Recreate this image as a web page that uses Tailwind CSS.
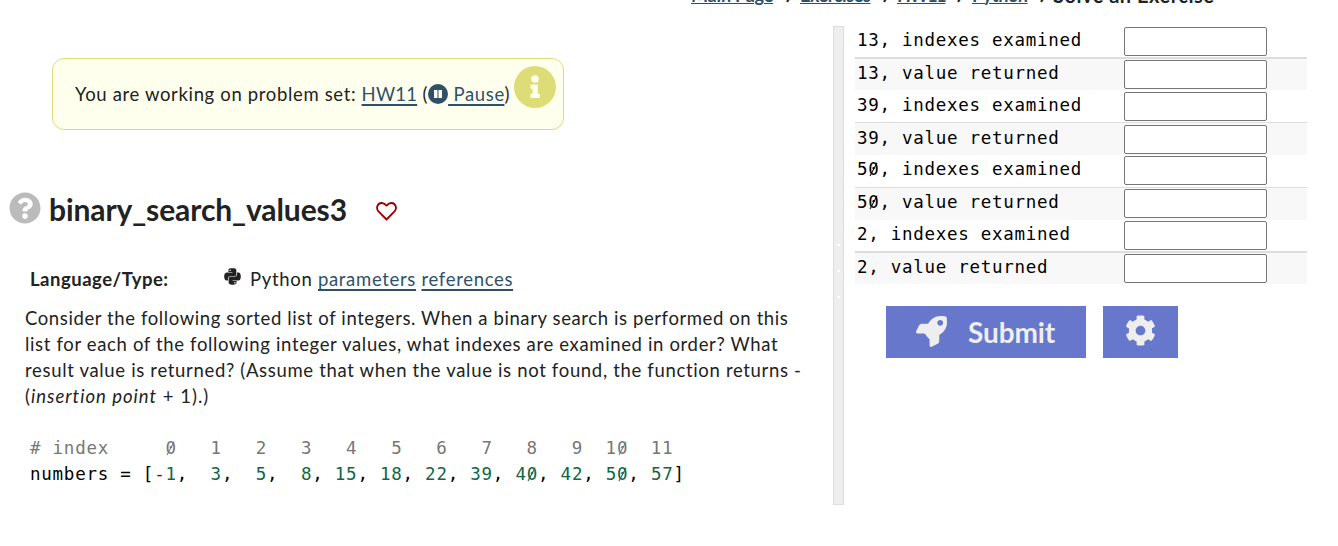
<!DOCTYPE html>
<html lang="en">
<head>
  <meta charset="UTF-8" />
  <meta name="viewport" content="width=device-width, initial-scale=1.0" />
  <title>binary_search_values3</title>
  <script src="https://cdn.jsdelivr.net/npm/@tailwindcss/browser@4"></script>
</head>
<body class="w-[1338px] h-[546px] overflow-hidden bg-white text-[#222] font-['Lato',sans-serif] text-[18.5px] tracking-[0.6px]">
  <!-- breadcrumbs -->
  <nav class="h-[26px] overflow-hidden pl-[691px]">
    <div class="-mt-[18px] flex h-[26px] items-center text-[18px] font-bold leading-[26px] whitespace-nowrap">
      <a class="w-[83px] underline decoration-1 underline-offset-1 text-[#2f5167] tracking-[-0.2px]">Main Page</a>
      <span class="w-[26px] pl-[11px] text-[24px]">›</span>
      <a class="w-[71px] underline decoration-1 underline-offset-1 text-[#2f5167] tracking-[-0.4px]">Exercises</a>
      <span class="w-[26px] pl-[11px] text-[24px]">›</span>
      <a class="w-[48px] underline decoration-1 underline-offset-1 text-[#2f5167] tracking-[-1.3px]">HW11</a>
      <span class="w-[27px] pl-[11px] text-[24px]">›</span>
      <a class="w-[56px] underline decoration-1 underline-offset-1 text-[#2f5167] tracking-[-0.4px]">Python</a>
      <span class="w-[25px] pl-[11px] text-[24px]">›</span>
      <span class="text-[20px] tracking-[0.5px]">Solve an Exercise</span>
    </div>
  </nav>

  <main class="flex h-[520px]">
    <!-- problem description -->
    <section class="w-[833px] shrink-0 pt-8">
      <div class="ml-[52px] flex h-[72px] w-[512px] rounded-xl border border-[#dddd77] bg-[#ffffee] pl-[22px]">
        <p class="w-[439px] leading-[71px] whitespace-nowrap tracking-[0.65px]">You are working on problem set: <a class="underline decoration-2 underline-offset-[3px] text-[#2f5167] tracking-[0.2px]">HW11</a> (<a class="text-[#2f5167]"><svg class="inline size-5 -mt-1" viewBox="0 0 20 20"><circle cx="10" cy="10" r="10" fill="#2f5167"/><path fill="#ffffee" d="M6 6h3.5v8H6zM10.5 6H14v8h-3.5z"/></svg><span class="underline decoration-2 underline-offset-[3px]">&nbsp;Pause</span></a>)</p>
        <svg class="mt-[7px] size-[42px]" viewBox="0 0 42 42"><circle cx="21" cy="21" r="21" fill="#dddd77"/><circle cx="21" cy="13" r="3.8" fill="#ffffee"/><path fill="#ffffee" d="M16.500 18.500h7.300v9.200h2v4.200h-9.300v-4.200h2v-5h-2z"/></svg>
      </div>

      <h1 class="mt-[62px] ml-[9px] flex h-9 items-center text-[30px] font-bold leading-9">
        <svg class="size-[32px] -mt-1 mr-2" viewBox="0 0 512 512"><path fill="#bbb" d="M504 256c0 137-111 248-248 248S8 393 8 256 119 8 256 8s248 111 248 248zM262.700 90c-54.500 0-89.300 23-116.500 63.800-3.500 5.300-2.400 12.400 2.700 16.300l34.700 26.300c5.200 3.900 12.600 3 16.700-2.100 17.900-22.700 30.100-35.800 57.300-35.800 20.400 0 45.700 13.100 45.700 33 0 15-12.400 22.700-32.500 34C247.100 238.500 216 254.900 216 296v4c0 6.600 5.400 12 12 12h56c6.600 0 12-5.400 12-12v-1.300c0-28.500 83.200-29.600 83.200-106.700 0-58-60.200-102-116.500-102zM256 338c-25.400 0-46 20.600-46 46s20.600 46 46 46 46-20.600 46-46-20.600-46-46-46z"/></svg>
        <span class="-mt-0.5 w-[327px] tracking-[-0.1px]">binary_search_values3</span>
        <svg class="h-[19px] w-[21px] mt-[3px]" viewBox="0 0 21 19"><path fill="none" stroke="#990000" stroke-width="1.800" stroke-linejoin="round" d="M10.500 17.500 2.500 9.400C-.3 6.300 1.300 1.200 5.400 1c2.300-.1 3.700 1 5.100 2.600C11.900 2 13.300.9 15.600 1c4.100.2 5.700 5.300 2.900 8.400z"/></svg>
      </h1>

      <div class="mt-[38px] flex h-[26px] items-center pl-[30px] leading-[26px] whitespace-nowrap">
        <span class="w-[193px] font-bold tracking-[0.5px]">Language/Type:</span>
        <svg class="mr-[8px] -mt-[5px] size-[19px]" viewBox="0 0 448 512"><path fill="#222" d="M439.800 200.500c-7.700-30.900-22.300-54.200-53.400-54.200h-40.100v47.400c0 36.800-31.200 67.800-66.800 67.800H172.700c-29.200 0-53.400 25-53.400 54.300v101.800c0 29 25.200 46 53.400 54.300 33.800 9.900 66.300 11.700 106.800 0 26.900-7.800 53.400-23.500 53.400-54.300v-40.700H226.200v-13.600h160.200c31.100 0 42.600-21.700 53.400-54.200 11.200-33.500 10.700-65.700 0-108.600zM286.200 404c11.100 0 20.100 9.100 20.100 20.300 0 11.300-9 20.400-20.100 20.400-11 0-20.100-9.200-20.100-20.400.1-11.300 9.100-20.300 20.100-20.300zM167.800 248.100h106.800c29.700 0 53.400-24.500 53.400-54.300V91.900c0-29-24.400-50.700-53.400-55.600-35.800-5.900-74.700-5.600-106.800.1-45.200 8-53.400 24.700-53.400 55.600v40.700h106.900v13.600h-147c-31.100 0-58.300 18.700-66.800 54.200-9.800 40.700-10.200 66.100 0 108.600 7.600 31.600 25.700 54.200 56.800 54.200H101v-48.800c0-35.300 30.500-66.400 66.800-66.400zm-6.700-142.600c-11.100 0-20.100-9.100-20.100-20.300.1-11.300 9-20.400 20.100-20.400 11 0 20.100 9.200 20.100 20.400s-9 20.300-20.100 20.300z"/></svg>
        <span class="tracking-[0.68px]">Python <a class="underline decoration-2 underline-offset-[3px] text-[#2f5167]">parameters</a> <a class="underline decoration-2 underline-offset-[3px] text-[#2f5167]">references</a></span>
      </div>

      <p class="mt-[13px] pl-[25px] leading-[26px] whitespace-nowrap">
        Consider the following sorted list of integers. When a binary search is performed on this<br />
        <span class="tracking-[0.65px]">list for each of the following integer values, what indexes are examined in order? What</span><br />
        <span class="tracking-[0.67px]">result value is returned? (Assume that when the value is not found, the function returns -</span><br />
        <span class="tracking-[1px]">(<i>insertion point</i> + 1).)</span>
      </p>

      <pre class="mt-[26px] pl-[30px] font-['DejaVu_Sans_Mono',monospace] text-[17.5px] tracking-[0.75px] leading-[26px] text-black"><span class="text-[#777]"># index     <span class="relative after:absolute after:left-[4.7px] after:top-[3px] after:h-[15px] after:w-[1.3px] after:rotate-[28deg] after:bg-current after:content-['']">0</span>   1   2   3   4   5   6   7   8   9  1<span class="relative after:absolute after:left-[4.7px] after:top-[3px] after:h-[15px] after:w-[1.3px] after:rotate-[28deg] after:bg-current after:content-['']">0</span>  11</span>
numbers = [<span class="text-[#990000]">-</span><span class="text-[#116644]">1</span>,  <span class="text-[#116644]">3</span>,  <span class="text-[#116644]">5</span>,  <span class="text-[#116644]">8</span>, <span class="text-[#116644]">15</span>, <span class="text-[#116644]">18</span>, <span class="text-[#116644]">22</span>, <span class="text-[#116644]">39</span>, <span class="text-[#116644]">4<span class="relative after:absolute after:left-[4.7px] after:top-[3px] after:h-[15px] after:w-[1.3px] after:rotate-[28deg] after:bg-current after:content-['']">0</span></span>, <span class="text-[#116644]">42</span>, <span class="text-[#116644]">5<span class="relative after:absolute after:left-[4.7px] after:top-[3px] after:h-[15px] after:w-[1.3px] after:rotate-[28deg] after:bg-current after:content-['']">0</span></span>, <span class="text-[#116644]">57</span>]</pre>
    </section>

    <!-- resize handle -->
    <div class="flex h-[479px] w-[11px] shrink-0 flex-col items-center gap-6 border border-[#ddd] bg-[#eee] pt-[217px]">
      <i class="h-0.5 w-[3px] bg-white"></i>
      <i class="h-0.5 w-[3px] bg-white"></i>
      <i class="h-0.5 w-[3px] bg-white"></i>
    </div>

    <!-- answers -->
    <section class="ml-[11px] w-[452px] -mt-px">
      <div class="font-['DejaVu_Sans_Mono',monospace] text-[17.5px] tracking-[0.71px] leading-[26px] text-black whitespace-nowrap">
        <div class="flex h-8 pt-0.5 pl-0.5"><label class="w-[267px]">13, indexes examined</label><input class="h-[29px] w-[143px] rounded-[2px] border border-[#767676] bg-white" /></div>
        <div class="flex h-[33px] border-t-2 border-[#ddd] bg-[#f8f8f8] pt-px pl-0.5"><label class="w-[267px]">13, value returned</label><input class="h-[29px] w-[143px] rounded-[2px] border border-[#767676] bg-white" /></div>
        <div class="flex h-8 pt-0.5 pl-0.5"><label class="w-[267px]">39, indexes examined</label><input class="h-[29px] w-[143px] rounded-[2px] border border-[#767676] bg-white" /></div>
        <div class="flex h-[33px] border-t border-[#ddd] bg-[#f8f8f8] pt-0.5 pl-0.5"><label class="w-[267px]">39, value returned</label><input class="h-[29px] w-[143px] rounded-[2px] border border-[#767676] bg-white" /></div>
        <div class="flex h-8 pt-px pl-0.5"><label class="w-[267px]">5<span class="relative after:absolute after:left-[4.7px] after:top-[3px] after:h-[15px] after:w-[1.3px] after:rotate-[28deg] after:bg-current after:content-['']">0</span>, indexes examined</label><input class="h-[29px] w-[143px] rounded-[2px] border border-[#767676] bg-white" /></div>
        <div class="flex h-[33px] border-t border-[#ddd] bg-[#f8f8f8] pt-px pl-0.5"><label class="w-[267px]">5<span class="relative after:absolute after:left-[4.7px] after:top-[3px] after:h-[15px] after:w-[1.3px] after:rotate-[28deg] after:bg-current after:content-['']">0</span>, value returned</label><input class="h-[29px] w-[143px] rounded-[2px] border border-[#767676] bg-white" /></div>
        <div class="flex h-[31px] pt-px pl-0.5"><label class="w-[267px]">2, indexes examined</label><input class="h-[29px] w-[143px] rounded-[2px] border border-[#767676] bg-white" /></div>
        <div class="flex h-[33px] border-t-2 border-[#ddd] bg-[#f8f8f8] pt-px pl-0.5"><label class="w-[267px]">2, value returned</label><input class="h-[29px] w-[143px] rounded-[2px] border border-[#767676] bg-white" /></div>
      </div>

      <div class="mt-[22px] ml-[31px] flex gap-[17px]">
        <button class="flex h-[52px] w-[200px] items-center bg-[#6677cc] pl-[30px] text-[28px] font-bold text-[#eee]">
          <svg class="mr-[21px] -mt-[2px] size-[31px]" viewBox="0 0 512 512"><path fill="#eee" d="M505.100 19.100c-1.200-5.500-6.700-11-12.200-12.200C460.700 0 435.500 0 410.400 0 307.200 0 245.300 55.200 199.100 128H94.900c-16.300 0-35.600 11.900-42.900 26.500L2.600 253.300c-8 16.100 3.400 34.700 21.500 34.700h103.800c22.300 0 40 17.900 40 40l56.100 56v103.800c0 18 18.800 29.500 34.700 21.500l98.700-49.400c14.600-7.300 26.500-26.600 26.500-42.900V312.800c72.600-46.300 128-108.400 128-211.100.1-25.200.1-50.400-6.800-82.600zM400 160c-26.500 0-48-21.500-48-48s21.500-48 48-48 48 21.500 48 48-21.500 48-48 48z"/></svg>
          <span class="tracking-[-0.1px]">Submit</span>
        </button>
        <button class="flex h-[52px] w-[75px] items-center justify-center bg-[#6677cc]">
          <svg class="-mt-[3px] size-[31px]" viewBox="0 0 512 512"><path fill="#eee" d="M487.400 315.700l-42.600-24.600c4.300-23.200 4.300-47 0-70.200l42.600-24.600c4.900-2.800 7.100-8.600 5.500-14-11.100-35.600-30-67.800-54.700-94.600-3.800-4.100-10-5.100-14.800-2.300L380.800 110c-17.900-15.400-38.500-27.300-60.800-35.100V25.800c0-5.600-3.900-10.500-9.400-11.700-36.700-8.200-74.300-7.800-109.200 0-5.500 1.200-9.400 6.100-9.400 11.700V75c-22.200 7.900-42.800 19.800-60.800 35.100L88.700 85.500c-4.900-2.800-11-1.900-14.800 2.300-24.700 26.700-43.600 58.900-54.700 94.600-1.700 5.400.6 11.200 5.500 14L67.300 221c-4.300 23.200-4.300 47 0 70.200l-42.600 24.600c-4.900 2.800-7.100 8.600-5.500 14 11.100 35.600 30 67.800 54.700 94.600 3.800 4.100 10 5.100 14.800 2.300l42.600-24.600c17.900 15.400 38.500 27.300 60.800 35.100v49.200c0 5.600 3.900 10.500 9.400 11.700 36.700 8.200 74.300 7.800 109.200 0 5.500-1.200 9.400-6.100 9.400-11.700v-49.200c22.200-7.900 42.800-19.800 60.800-35.100l42.600 24.600c4.900 2.800 11 1.900 14.800-2.300 24.700-26.700 43.600-58.900 54.700-94.600 1.500-5.500-.7-11.300-5.600-14.100zM256 336c-44.100 0-80-35.900-80-80s35.900-80 80-80 80 35.900 80 80-35.900 80-80 80z"/></svg>
        </button>
      </div>
    </section>
  </main>
</body>
</html>
